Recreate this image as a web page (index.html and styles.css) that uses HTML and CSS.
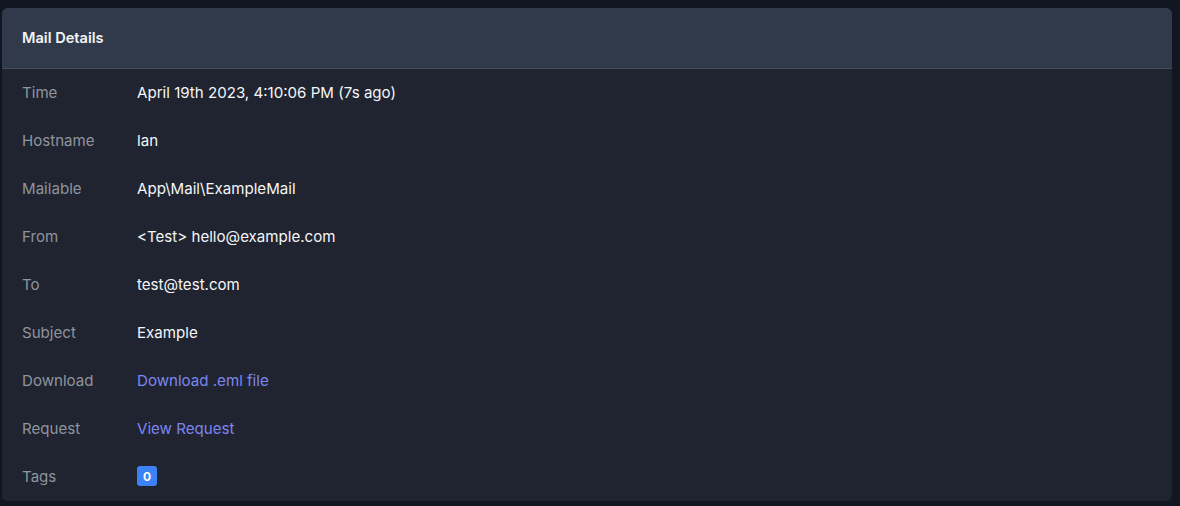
FILE: index.html
```html
<!DOCTYPE html>
<html>
<head>
<meta charset="utf-8">
<link rel="stylesheet" href="styles.css">
</head>
<body>
<div class="card">
  <div class="card-header">Mail Details</div>
  <div class="rows">
    <div class="row"><div class="label">Time</div><div class="value">April 19th 2023, 4:10:06 PM (7s ago)</div></div>
    <div class="row"><div class="label">Hostname</div><div class="value">lan</div></div>
    <div class="row"><div class="label">Mailable</div><div class="value">App\Mail\ExampleMail</div></div>
    <div class="row"><div class="label">From</div><div class="value">&lt;Test&gt; hello@example.com</div></div>
    <div class="row"><div class="label">To</div><div class="value">test@test.com</div></div>
    <div class="row"><div class="label">Subject</div><div class="value">Example</div></div>
    <div class="row"><div class="label">Download</div><div class="value"><a class="link" href="#">Download .eml file</a></div></div>
    <div class="row"><div class="label">Request</div><div class="value"><a class="link" href="#">View Request</a></div></div>
    <div class="row"><div class="label">Tags</div><div class="value"><span class="badge">0</span></div></div>
  </div>
</div>
</body>
</html>
```
FILE: styles.css
```css
html, body {
  margin: 0;
  padding: 0;
  background: #121620;
  font-family: Inter, "Noto Sans", sans-serif;
}
body {
  padding: 8px 8px 6px 2px;
}
.card {
  background: #1f2430;
  border-radius: 6px;
  overflow: hidden;
}
.card-header {
  background: #313a4a;
  height: 61px;
  box-sizing: border-box;
  border-bottom: 1px solid #444e5f;
  display: flex;
  align-items: center;
  padding-left: 20px;
  color: #f3f4f6;
  font-size: 14.6px;
  font-weight: 600;
}
.rows {
  display: flex;
  flex-direction: column;
}
.row {
  height: 48px;
  box-sizing: border-box;
  padding-bottom: 2px;
  display: flex;
  align-items: center;
  font-size: 15.1px;
}
.label {
  width: 115px;
  padding-left: 20px;
  color: #8f949e;
}
.value {
  color: #f5f6f8;
}
.link {
  color: #7d86f0;
  text-decoration: none;
}
.badge {
  display: inline-flex;
  align-items: center;
  justify-content: center;
  width: 20px;
  height: 20px;
  background: #3b82f6;
  color: #fff;
  border-radius: 3px;
  font-size: 12px;
  font-weight: 700;
}
```
